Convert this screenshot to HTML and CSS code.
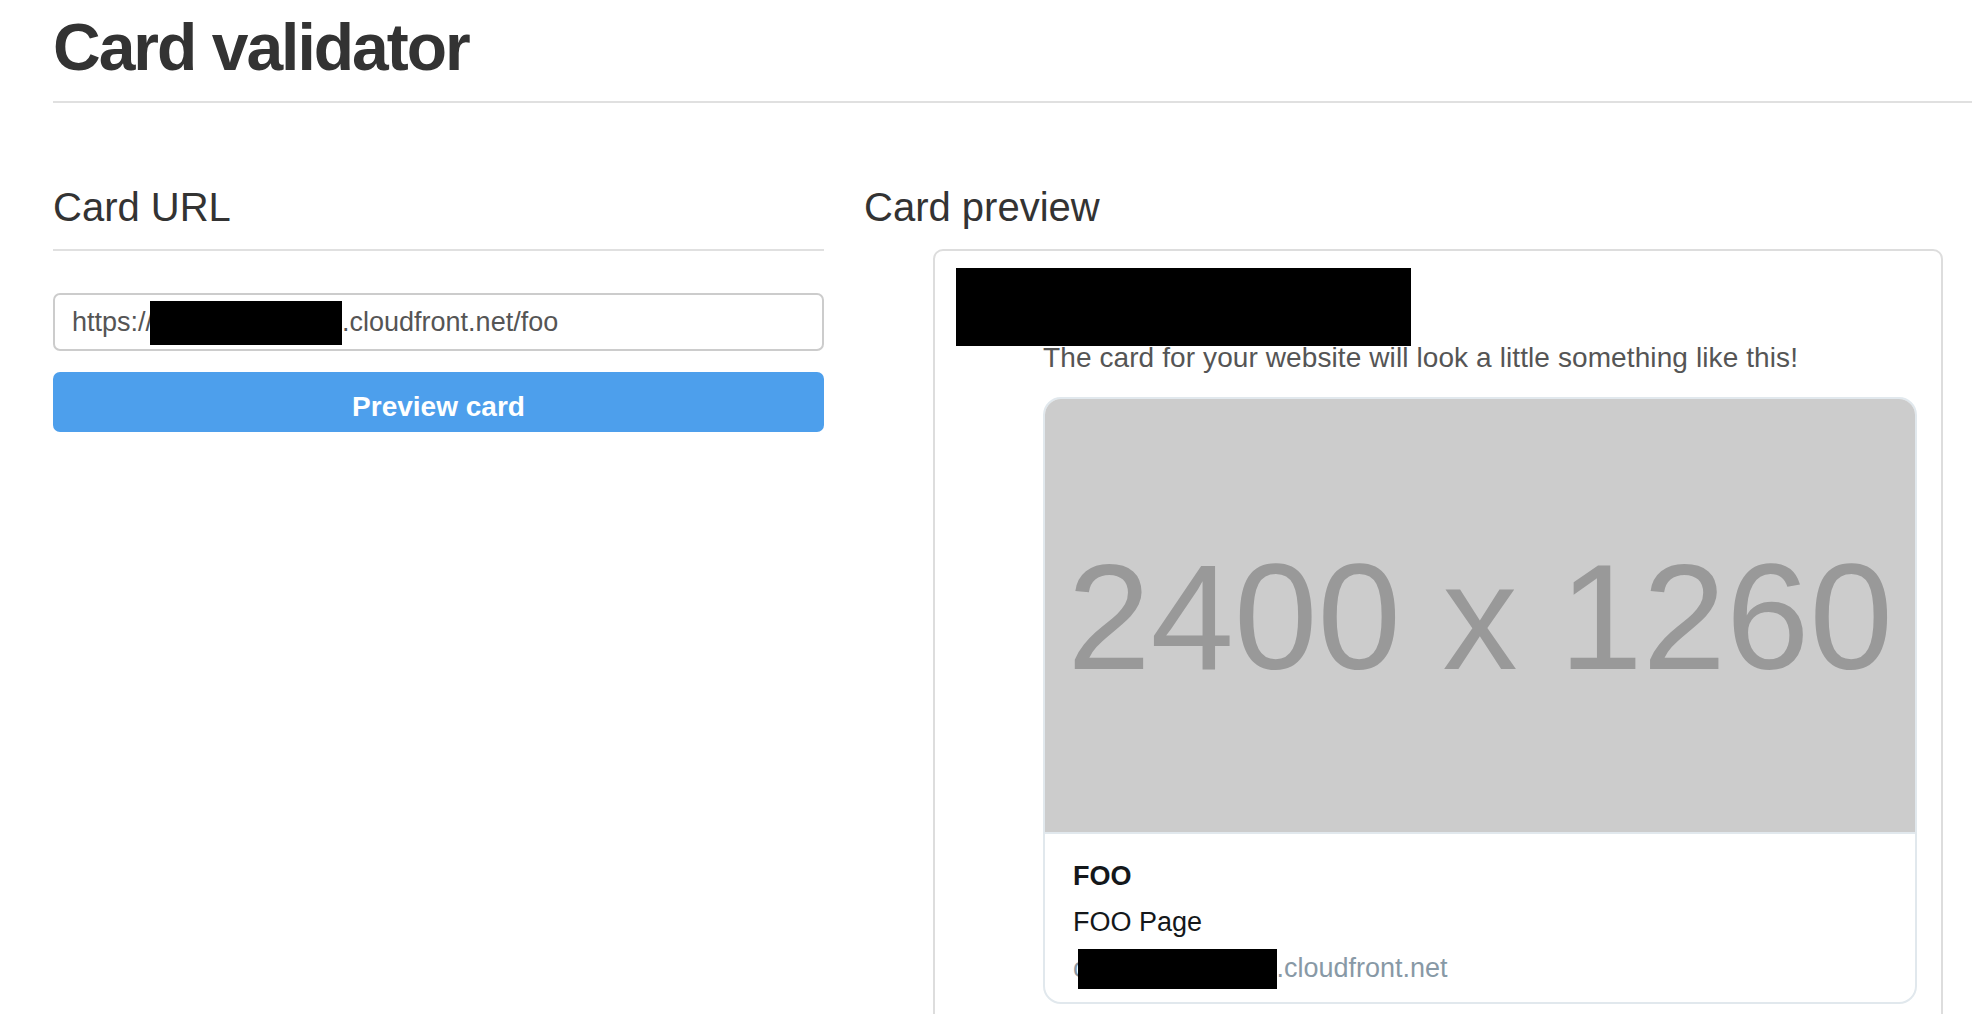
FILE: index.html
```html
<!DOCTYPE html>
<html lang="en">
<head>
  <meta charset="UTF-8" />
  <meta name="viewport" content="width=device-width, initial-scale=1.0" />
  <title>Card validator</title>
  <link rel="stylesheet" href="styles.css">
</head>
<body>
  <div class="page">
    <div class="page-header">
      <h1>Card validator</h1>
    </div>

    <div class="row">
      <div class="col-left">
        <h3 class="section-title underlined">Card URL</h3>
        <div class="form-control">
          <span>https://</span><span class="redact url-redact"></span><span>.cloudfront.net/foo</span>
        </div>
        <button class="btn-preview">Preview card</button>
      </div>

      <div class="col-right">
        <h3 class="section-title">Card preview</h3>
        <div class="preview-box">
          <div class="redact author-redact"></div>
          <div class="tweet">
            <p class="tweet-text">The card for your website will look a little something like this!</p>
            <div class="card">
              <div class="card-image">2400 x 1260</div>
              <div class="card-body">
                <div class="card-title">FOO</div>
                <div class="card-desc">FOO Page</div>
                <div class="card-url">c<span class="redact domain-redact"></span>.cloudfront.net</div>
              </div>
            </div>
          </div>
        </div>
      </div>
    </div>
  </div>
</body>
</html>
```

FILE: styles.css
```css
body {
  margin: 0;
  font-family: "Liberation Sans", Arial, sans-serif;
  font-size: 28px;
  color: #333;
  background: #fff;
  overflow: hidden;
}

.page {
  padding-left: 53px;
}

.page-header {
  border-bottom: 2px solid #e0e0e0;
  padding-bottom: 17px;
  margin-top: 11px;
}

h1 {
  margin: 0;
  font-size: 66px;
  font-weight: bold;
  letter-spacing: -2px;
  line-height: 1.1;
  color: #333;
}

.row {
  display: flex;
  gap: 40px;
  margin-top: 82px;
}

.col-left {
  width: 771px;
  flex-shrink: 0;
}

.col-right {
  flex: 1;
  padding-right: 29px;
}

.section-title {
  margin: 0;
  font-size: 40px;
  font-weight: normal;
  line-height: 44px;
  padding-bottom: 20px;
  color: #333;
}

.section-title.underlined {
  border-bottom: 2px solid #e0e0e0;
}

.form-control {
  margin-top: 42px;
  height: 58px;
  box-sizing: border-box;
  border: 2px solid #ccc;
  border-radius: 7px;
  padding: 2px 17px 0;
  display: flex;
  align-items: center;
  font-size: 27px;
  color: #555;
  white-space: nowrap;
}

.redact {
  display: inline-block;
  background: #000;
}

.url-redact {
  width: 192px;
  height: 44px;
  margin-left: -3px;
}

.btn-preview {
  display: block;
  width: 100%;
  margin-top: 21px;
  height: 60px;
  border: none;
  border-radius: 7px;
  background: #4d9fec;
  color: #fff;
  font-family: "Liberation Sans", Arial, sans-serif;
  font-size: 28px;
  font-weight: bold;
  padding: 10px 0 0;
}

.preview-box {
  margin-left: 69px;
  border: 2px solid #ddd;
  border-radius: 10px;
  padding: 17px 24px 20px 21px;
}

.author-redact {
  display: block;
  width: 455px;
  height: 78px;
  position: relative;
  z-index: 1;
}

.tweet {
  margin-left: 87px;
}

.tweet-text {
  margin: -8px 0 0;
  line-height: 39px;
  font-size: 28px;
  letter-spacing: 0.1px;
  color: #555;
}

.card {
  margin-top: 20px;
  border: 2px solid #e1e8ed;
  border-radius: 18px;
  overflow: hidden;
}

.card-image {
  height: 435px;
  background: #ccc;
  border-bottom: 2px solid #e1e8ed;
  display: flex;
  align-items: center;
  justify-content: center;
  font-size: 150px;
  color: #999;
  padding-top: 4px;
  box-sizing: border-box;
}

.card-body {
  padding: 19px 28px 11px;
  font-size: 27px;
  line-height: 46px;
  color: #14171a;
}

.card-title {
  font-weight: bold;
}

.card-url {
  color: #8899a6;
  white-space: nowrap;
}

.domain-redact {
  width: 199px;
  height: 40px;
  margin-left: -9px;
  vertical-align: -12px;
}
```
